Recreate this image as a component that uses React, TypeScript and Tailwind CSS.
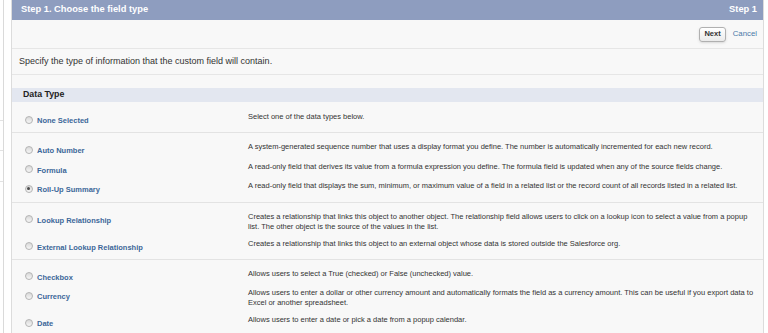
import React from 'react';

type FieldType = {
  label: string;
  description: string;
  checked?: boolean;
};

const groups: FieldType[][] = [
  [{ label: 'None Selected', description: 'Select one of the data types below.' }],
  [
    {
      label: 'Auto Number',
      description:
        'A system-generated sequence number that uses a display format you define. The number is automatically incremented for each new record.',
    },
    {
      label: 'Formula',
      description:
        'A read-only field that derives its value from a formula expression you define. The formula field is updated when any of the source fields change.',
    },
    {
      label: 'Roll-Up Summary',
      description:
        'A read-only field that displays the sum, minimum, or maximum value of a field in a related list or the record count of all records listed in a related list.',
      checked: true,
    },
  ],
  [
    {
      label: 'Lookup Relationship',
      description:
        'Creates a relationship that links this object to another object. The relationship field allows users to click on a lookup icon to select a value from a popup list. The other object is the source of the values in the list.',
    },
    {
      label: 'External Lookup Relationship',
      description:
        'Creates a relationship that links this object to an external object whose data is stored outside the Salesforce org.',
    },
  ],
  [
    {
      label: 'Checkbox',
      description: 'Allows users to select a True (checked) or False (unchecked) value.',
    },
    {
      label: 'Currency',
      description:
        'Allows users to enter a dollar or other currency amount and automatically formats the field as a currency amount. This can be useful if you export data to Excel or another spreadsheet.',
    },
    {
      label: 'Date',
      description: 'Allows users to enter a date or pick a date from a popup calendar.',
    },
  ],
];

const Radio = ({ checked }: { checked?: boolean }) => (
  <span className="-ml-[0.5px] flex h-[8px] w-[8px] shrink-0 items-center justify-center rounded-full border border-[#b4b4b4] bg-gradient-to-b from-[#d9d9d9] to-[#f6f6f6]">
    {checked && <span className="h-[3px] w-[3px] rounded-full bg-[#4a4a4a]" />}
  </span>
);

const App = () => {
  return (
    <div className="flex h-[333px] w-[768px] overflow-hidden bg-white font-['Liberation_Sans',Arial,sans-serif]">
      {/* Sidebar edge */}
      <div className="flex w-[11px] shrink-0">
        <div className="flex w-[4px] flex-col border-r border-[#dadada]">
          <div className="h-[121px] border-b border-[#e2e2e2]" />
          <div className="h-[30px] border-b border-[#e2e2e2]" />
          <div className="h-[31px] border-b border-[#e2e2e2]" />
        </div>
      </div>

      {/* Wizard panel */}
      <div className="flex w-[753px] shrink-0 flex-col border-x border-[#dcdcdc] bg-[#f8f8f8]">
        <div className="flex h-[20px] shrink-0 items-center justify-between bg-[#8e9dbf] pl-[9px] pr-[6px] text-[9.3px] font-bold text-white">
          <span>Step 1. Choose the field type</span>
          <span>Step 1</span>
        </div>

        <div className="flex h-[29px] shrink-0 items-center justify-end border-b border-[#e6e6e6] pr-[6px]">
          <button className="flex h-[15px] items-center rounded-[3px] border border-[#b0b0b0] bg-gradient-to-b from-white to-[#ebebeb] px-[4px] text-[7.5px] font-bold text-[#333] shadow-sm">
            Next
          </button>
          <span className="ml-[7px] text-[7.8px] text-[#4a78a8]">Cancel</span>
        </div>

        <div className="flex h-[26px] shrink-0 items-center border-b border-[#e6e6e6] pl-[7px] text-[9px] text-[#333]">
          Specify the type of information that the custom field will contain.
        </div>

        <div className="h-[13px] shrink-0" />

        <div className="flex h-[14px] shrink-0 items-center bg-[#e3e7f0] pl-[11px] text-[8.8px] font-bold text-[#222]">
          Data Type
        </div>

        {groups.map((group, gi) => (
          <div
            key={gi}
            className={`shrink-0 border-b border-[#e3e3e3] pb-[3px] ${gi === 0 ? 'pt-[8px]' : 'pt-[7px]'}`}
          >
            {group.map((item) => (
              <div key={item.label} className="flex min-h-[19.4px] items-start">
                <div className="flex w-[236px] shrink-0 items-start gap-[4.5px] pl-[13px] pt-[5.5px]">
                  <Radio checked={item.checked} />
                  <span className="mt-[0.5px] text-[7.5px] font-bold leading-[10px] text-[#3b6799]">
                    {item.label}
                  </span>
                </div>
                <div className="flex-1 pb-[5px] pr-[3px] pt-[2px] text-[7.5px] leading-[10px] text-[#333]">
                  {item.description}
                </div>
              </div>
            ))}
          </div>
        ))}
      </div>
    </div>
  );
};

export default App;
